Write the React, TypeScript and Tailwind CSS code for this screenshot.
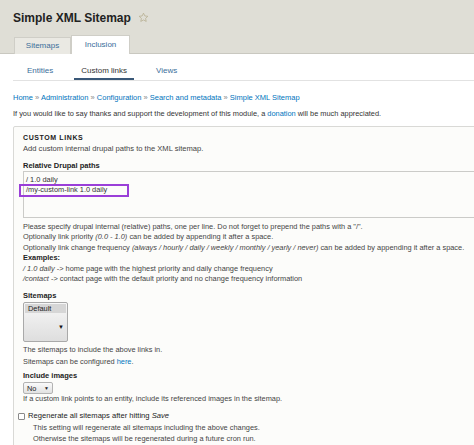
import React from "react";

const Star: React.FC = () => (
  <svg width="11" height="11" viewBox="0 0 24 24" fill="none" stroke="#b3ab8c" strokeWidth="1.6" strokeLinejoin="round">
    <path d="M12 2.5l2.9 6.1 6.6.8-4.9 4.6 1.3 6.6L12 17.3l-5.9 3.3 1.3-6.6-4.9-4.6 6.6-.8z" />
  </svg>
);

const App: React.FC = () => {
  return (
    <div className="w-[474px] h-[445px] overflow-hidden bg-white text-[#333] font-['Liberation_Sans',Arial,sans-serif]">
      {/* header */}
      <div className="h-[54px] bg-[#dfded6] border-b border-[#c9c8c0] flex flex-col">
        <div className="flex items-center gap-[7px] pl-[13px] pt-[10px] h-[25px]">
          <h1 className="text-[12px] leading-[16px] font-bold text-[#222]">Simple XML Sitemap</h1>
          <Star />
        </div>
        <div className="mt-auto flex items-end pl-[14px] mb-[-1px]">
          <div className="w-[57px] h-[17px] bg-[#eae9e3] border border-b-0 border-[#cfcec7] flex items-center justify-center text-[8px] text-[#3b6e9a]">
            Sitemaps
          </div>
          <div className="w-[59px] h-[19px] bg-white border border-b-0 border-[#cfcec7] flex items-center justify-center text-[8px] text-[#3b6e9a]">
            Inclusion
          </div>
        </div>
      </div>

      {/* secondary tabs */}
      <div className="ml-[13px] border-b border-[#e2e2e2] flex items-end h-[27px] text-[8px] leading-[10px]">
        <div className="ml-[14px] pb-[4px] text-[#3b6e9a]">Entities</div>
        <div className="ml-[21px] px-[7px] pb-[2px] border-b-2 border-[#3a5878] text-[#333]">Custom links</div>
        <div className="ml-[22px] pb-[4px] text-[#3b6e9a]">Views</div>
      </div>

      <div className="pl-[13px]">
        <div className="mt-[12px] text-[7.5px] leading-[10px] text-[#0074bd]">
          Home <span className="text-[#888]">»</span> Administration <span className="text-[#888]">»</span> Configuration{" "}
          <span className="text-[#888]">»</span> Search and metadata <span className="text-[#888]">»</span> Simple XML Sitemap
        </div>
        <div className="mt-[6px] text-[7.4px] leading-[10px] text-[#333]">
          If you would like to say thanks and support the development of this module, a{" "}
          <span className="text-[#0074bd]">donation</span> will be much appreciated.
        </div>

        {/* fieldset */}
        <div className="mt-[7px] w-[480px] border border-[#d9d9d6] rounded-[2px] bg-[#fcfcfa] pl-[9px] pt-[6px] pb-[20px]">
          <div className="text-[7px] leading-[10px] font-bold tracking-[0.6px] text-[#222]">CUSTOM LINKS</div>
          <div className="mt-[1px] text-[7.6px] leading-[10px] text-[#444]">
            Add custom internal drupal paths to the XML sitemap.
          </div>
          <div className="mt-[7px] text-[7.5px] leading-[10px] font-bold text-[#222]">Relative Drupal paths</div>

          <div className="relative h-[47px] border border-[#cbcbc8] bg-[#fcfcfa] pl-[2px] pt-[3px] text-[7.4px] leading-[10px] text-[#333]">
            <div>/ 1.0 daily</div>
            <div>/my-custom-link 1.0 daily</div>
            <div className="absolute left-[-5px] top-[12px] w-[110px] h-[13px] border-2 border-[#9a3fd8]" />
          </div>

          <div className="mt-[4px] text-[7.4px] leading-[10.4px] text-[#444]">
            <div>
              Please specify drupal internal (relative) paths, one per line. Do not forget to prepend the paths with a "/".
            </div>
            <div>
              Optionally link priority <i>(0.0 - 1.0)</i> can be added by appending it after a space.
            </div>
            <div>
              Optionally link change frequency <i>(always / hourly / daily / weekly / monthly / yearly / never)</i> can be
              added by appending it after a space.
            </div>
            <div className="font-bold text-[#222]">Examples:</div>
            <div>
              <i>/ 1.0 daily</i> -&gt; home page with the highest priority and daily change frequency
            </div>
            <div>
              <i>/contact</i> -&gt; contact page with the default priority and no change frequency information
            </div>
          </div>

          <div className="mt-[7px] text-[7.5px] leading-[10px] font-bold text-[#222]">Sitemaps</div>
          <div className="mt-[1px] w-[45px] h-[40px] border border-[#a9a9a9] rounded-[2px] bg-gradient-to-b from-[#f7f7f7] to-[#dedede] flex flex-col">
            <div className="mx-[1px] mt-[1px] px-[3px] bg-[#d6d6d6] text-[7.4px] leading-[9px] text-[#222]">Default</div>
            <div className="flex-1 flex items-center justify-end pr-[3px] text-[6px] text-[#111]">▼</div>
          </div>

          <div className="mt-[2px] text-[7.4px] leading-[12px] text-[#444]">
            <div>The sitemaps to include the above links in.</div>
            <div>
              Sitemaps can be configured <span className="text-[#0074bd]">here</span>.
            </div>
          </div>

          <div className="mt-[3px] text-[7.5px] leading-[10px] font-bold text-[#222]">Include images</div>
          <div className="mt-[1px] w-[30px] h-[12px] border border-[#b3b3b3] rounded-[2px] bg-gradient-to-b from-[#fafafa] to-[#e2e2e2] flex items-center justify-between px-[3px] text-[7.4px] text-[#222]">
            <span>No</span>
            <span className="text-[5px]">▼</span>
          </div>
          <div className="text-[7.4px] leading-[10px] text-[#444]">
            If a custom link points to an entity, include its referenced images in the sitemap.
          </div>

          <div className="mt-[7px] flex items-center ml-[-5px] text-[7.6px] leading-[10px] text-[#222]">
            <div className="w-[7px] h-[7px] border border-[#8a8a8a] rounded-[1px] bg-white" />
            <span className="ml-[3px]">
              Regenerate all sitemaps after hitting <i>Save</i>
            </span>
          </div>
          <div className="ml-[10px] mt-[1px] text-[7.4px] leading-[11px] text-[#444]">
            <div>This setting will regenerate all sitemaps including the above changes.</div>
            <div>Otherwise the sitemaps will be regenerated during a future cron run.</div>
          </div>
        </div>
      </div>
    </div>
  );
};

export default App;
